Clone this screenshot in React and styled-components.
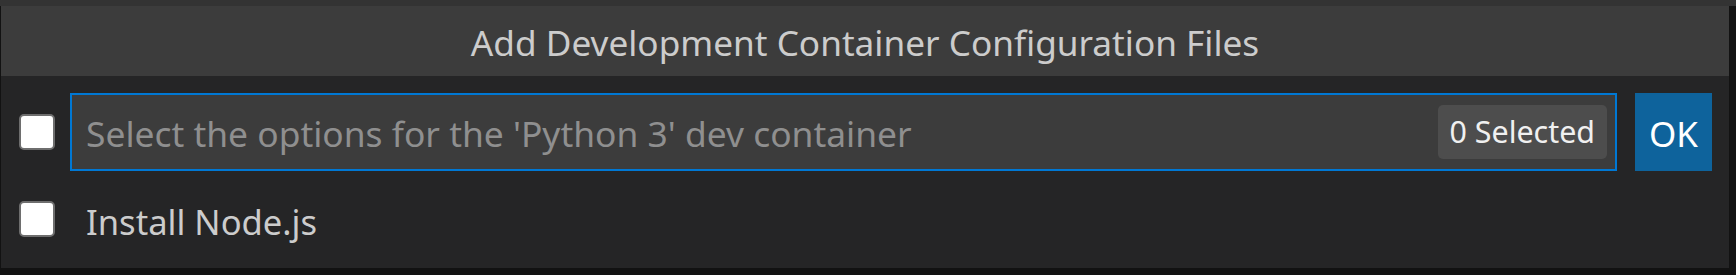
import React from 'react'
import styled, { createGlobalStyle } from 'styled-components'

const Global = createGlobalStyle`
  html, body {
    margin: 0;
    padding: 0;
    background: #121212;
  }
  body {
    font-family: "Noto Sans", "Open Sans", sans-serif;
  }
`

const Page = styled.div`
  width: 1736px;
  height: 275px;
  box-sizing: border-box;
  border-top: 6px solid #333333;
  padding-left: 1px;
  background: #121212;
`

const Panel = styled.div`
  width: 1728px;
  height: 262px;
  display: flex;
  flex-direction: column;
  background: #252526;
`

const Title = styled.div`
  height: 70px;
  flex: none;
  display: flex;
  align-items: center;
  justify-content: center;
  background: #3c3c3c;
  color: #cccccc;
  font-size: 35.2px;
  padding-top: 2px;
  box-sizing: border-box;
`

const Body = styled.div`
  display: flex;
  flex-direction: column;
  padding: 17px 17px 0 18px;
`

const Row = styled.div`
  display: flex;
  align-items: center;
  height: ${(p) => p.$height}px;
`

const Check = styled.span`
  flex: none;
  width: 36px;
  height: 36px;
  box-sizing: border-box;
  border: 2px solid #6e6e6e;
  border-radius: 5px;
  background: #ffffff;
  margin-right: ${(p) => p.$gap}px;
`

const InputBox = styled.div`
  flex: 1;
  height: 78px;
  box-sizing: border-box;
  border: 2px solid #0078d4;
  background: #3c3c3c;
  display: flex;
  align-items: center;
  padding: 0 8px 0 14px;
`

const Placeholder = styled.span`
  flex: 1;
  color: #8f8f8f;
  font-size: 35.4px;
  white-space: nowrap;
  padding-top: 2px;
`

const Badge = styled.span`
  height: 54px;
  box-sizing: border-box;
  padding: 0 12px 2px;
  display: flex;
  align-items: center;
  background: #4d4d4d;
  border-radius: 5px;
  color: #f0f0f0;
  font-size: 30.4px;
`

const OkButton = styled.button`
  margin-left: 18px;
  width: 77px;
  height: 78px;
  border: none;
  background: #0e639c;
  color: #ffffff;
  font-family: inherit;
  font-size: 35px;
  padding: 2px 0 0;
`

const Label = styled.span`
  color: #cccccc;
  font-size: 34.6px;
  padding-top: 4px;
`

export default function App() {
  return (
    <>
      <Global />
      <Page>
        <Panel>
          <Title>Add Development Container Configuration Files</Title>
          <Body>
            <Row $height={78}>
              <Check $gap={15} />
              <InputBox>
                <Placeholder>Select the options for the 'Python 3' dev container</Placeholder>
                <Badge>0 Selected</Badge>
              </InputBox>
              <OkButton>OK</OkButton>
            </Row>
            <Row $height={96}>
              <Check $gap={31} />
              <Label>Install Node.js</Label>
            </Row>
          </Body>
        </Panel>
      </Page>
    </>
  )
}
